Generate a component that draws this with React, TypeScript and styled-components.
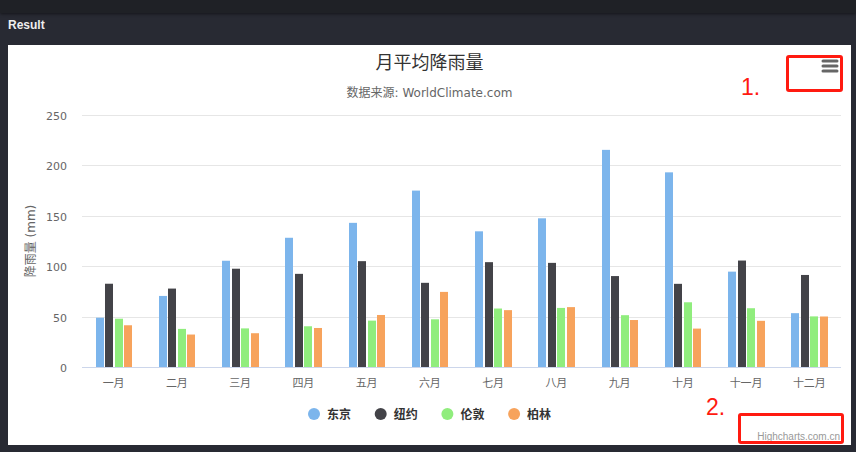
import styled, { createGlobalStyle } from "styled-components";

const GlobalStyle = createGlobalStyle`
  html, body {
    margin: 0;
    padding: 0;
    background: #282a33;
  }
`;

const Page = styled.div`
  width: 856px;
  height: 452px;
  display: flex;
  flex-direction: column;
  background: #282a33;
  overflow: hidden;
`;

const TopBar = styled.div`
  height: 13px;
  background: #1f2126;
  box-shadow: 0 1px 3px rgba(0, 0, 0, 0.5);
`;

const ResultHeader = styled.div`
  height: 32px;
  box-sizing: border-box;
  padding: 5px 0 0 8px;
  font-family: "Liberation Sans", Arial, sans-serif;
  font-weight: bold;
  font-size: 12px;
  line-height: 15px;
  color: #eeeeee;
`;

const Panel = styled.div`
  position: relative;
  margin: 0 5px 0 8px;
  height: 400px;
  background: #ffffff;
`;

const Mark = styled.div<{ $left: number; $top: number; $w: number; $h: number }>`
  position: absolute;
  left: ${(p) => p.$left}px;
  top: ${(p) => p.$top}px;
  width: ${(p) => p.$w}px;
  height: ${(p) => p.$h}px;
  box-sizing: border-box;
  border: 3px solid #ff1a10;
  border-radius: 3px;
`;

const MarkNumber = styled.div<{ $left: number; $top: number }>`
  position: absolute;
  left: ${(p) => p.$left}px;
  top: ${(p) => p.$top}px;
  font-family: "Liberation Sans", Arial, sans-serif;
  font-size: 23px;
  line-height: 23px;
  color: #ff1a10;
`;

const Chart = styled.svg`
  display: block;
  font-family: "DejaVu Sans", "Noto Sans CJK SC", sans-serif;
`;

const months = ["一月", "二月", "三月", "四月", "五月", "六月", "七月", "八月", "九月", "十月", "十一月", "十二月"];

const series = [
  { name: "东京", color: "#7cb5ec", data: [49.9, 71.5, 106.4, 129.2, 144.0, 176.0, 135.6, 148.5, 216.4, 194.1, 95.6, 54.4] },
  { name: "纽约", color: "#434348", data: [83.6, 78.8, 98.5, 93.4, 106.0, 84.5, 105.0, 104.3, 91.2, 83.5, 106.6, 92.3] },
  { name: "伦敦", color: "#90ed7d", data: [48.9, 38.8, 39.3, 41.4, 47.0, 48.3, 59.0, 59.6, 52.4, 65.2, 59.3, 51.2] },
  { name: "柏林", color: "#f7a35c", data: [42.4, 33.2, 34.5, 39.7, 52.6, 75.5, 57.4, 60.4, 47.6, 39.1, 46.8, 51.1] },
];

const plotLeft = 74;
const plotRight = 833;
const plotTop = 70;
const plotBottom = 322;
const catW = (plotRight - plotLeft) / months.length;
const yScale = (plotBottom - plotTop) / 250;

function RainChart() {
  const ticks = [0, 50, 100, 150, 200, 250];
  const groupW = catW * 0.6;
  const slot = groupW / series.length;
  return (
    <Chart width={843} height={400} viewBox="0 0 843 400">
      <text x={421.5} y={24} textAnchor="middle" fontSize={18} fill="#333333" fontFamily='"Noto Sans CJK SC", sans-serif'>
        月平均降雨量
      </text>
      <text x={421.5} y={52} textAnchor="middle" fontSize={12} fill="#666666">
        <tspan fontFamily='"Noto Sans CJK SC", sans-serif'>数据来源</tspan>: WorldClimate.com
      </text>

      <g stroke="#666666" strokeWidth={3} strokeLinecap="round">
        <line x1={815} y1={16} x2={829} y2={16} />
        <line x1={815} y1={21} x2={829} y2={21} />
        <line x1={815} y1={26} x2={829} y2={26} />
      </g>

      {ticks.map((t) => {
        const y = Math.round(plotBottom - t * yScale) + 0.5;
        return (
          <g key={t}>
            {t > 0 && <line x1={plotLeft} x2={plotRight} y1={y} y2={y} stroke="#e6e6e6" strokeWidth={1} />}
            <text x={plotLeft - 15} y={y + 4} textAnchor="end" fontSize={11} fill="#666666">
              {t}
            </text>
          </g>
        );
      })}

      <text
        transform={`translate(27 ${(plotTop + plotBottom) / 2}) rotate(-90)`}
        textAnchor="middle"
        fontSize={12}
        fill="#666666"
      >
        <tspan fontFamily='"Noto Sans CJK SC", sans-serif'>降雨量</tspan> (mm)
      </text>

      {months.map((m, i) => {
        const x0 = plotLeft + i * catW;
        return (
          <g key={m}>
            {series.map((s, k) => {
              const h = Math.max(s.data[i] * yScale - 1, 0);
              const x = Math.round(x0 + catW * 0.2 + k * slot + slot * 0.1);
              return <rect key={s.name} x={x} y={plotBottom - h} width={8} height={h} fill={s.color} />;
            })}
            <text
              x={x0 + catW / 2}
              y={342}
              textAnchor="middle"
              fontSize={11}
              fill="#666666"
              fontFamily='"Noto Sans CJK SC", sans-serif'
            >
              {m}
            </text>
          </g>
        );
      })}

      <line x1={plotLeft} x2={plotRight} y1={plotBottom + 0.5} y2={plotBottom + 0.5} stroke="#ccd6eb" strokeWidth={1} />

      {series.map((s, k) => {
        const cx = 306 + k * 66.7;
        return (
          <g key={s.name}>
            <circle cx={cx} cy={369} r={6} fill={s.color} />
            <text
              x={cx + 13}
              y={373.5}
              fontSize={12}
              fontWeight="bold"
              fill="#333333"
              fontFamily='"Noto Sans CJK SC", sans-serif'
            >
              {s.name}
            </text>
          </g>
        );
      })}

      <text x={832} y={395} textAnchor="end" fontSize={10} fill="#999999" fontFamily='"Liberation Sans", Arial, sans-serif'>
        Highcharts.com.cn
      </text>
    </Chart>
  );
}

export default function App() {
  return (
    <>
      <GlobalStyle />
      <Page>
        <TopBar />
        <ResultHeader>Result</ResultHeader>
        <Panel>
          <RainChart />
          <Mark $left={778} $top={10} $w={57} $h={37} />
          <MarkNumber $left={733} $top={31}>1.</MarkNumber>
          <Mark $left={730} $top={368} $w={106} $h={31} />
          <MarkNumber $left={698} $top={351}>2.</MarkNumber>
        </Panel>
      </Page>
    </>
  );
}
